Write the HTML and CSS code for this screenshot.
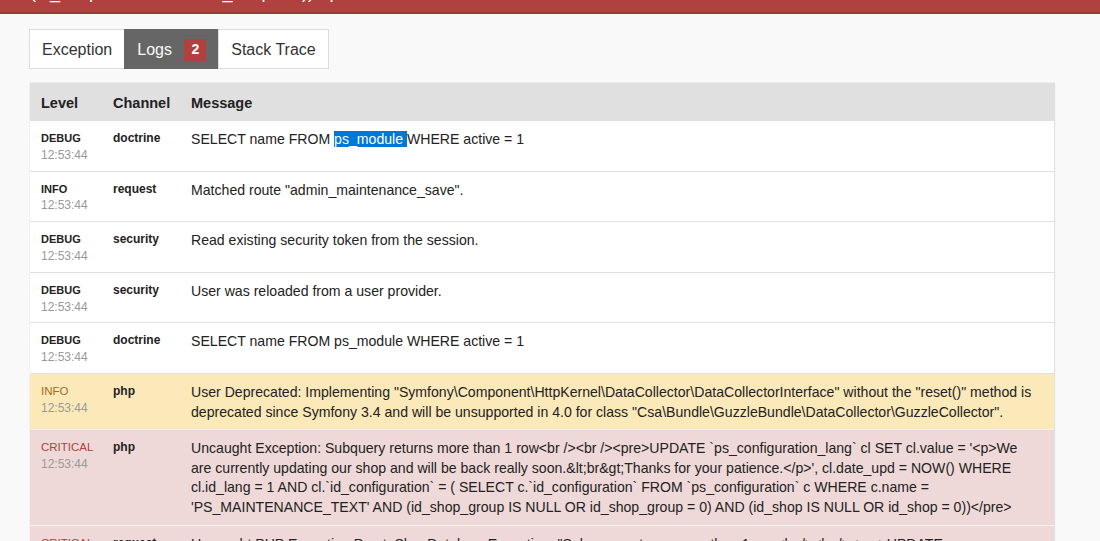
FILE: index.html
```html
<!DOCTYPE html>
<html lang="en">
<head>
<meta charset="utf-8">
<title>Subquery returns more than 1 row - Logs</title>
<link rel="stylesheet" href="styles.css">
</head>
<body>
<header class="summary">
  <div class="container">
    <h2 class="exception-message">Subquery returns more than 1 row&lt;br /&gt;&lt;br /&gt;&lt;pre&gt;UPDATE `ps_configuration_lang` cl SET cl.value = '&lt;p&gt;We are currently updating our shop and will be back really soon.&amp;lt;br&amp;gt;Thanks for your patience.&lt;/p&gt;', cl.date_upd = NOW() WHERE cl.id_lang = 1 AND cl.`id_configuration` = ( SELECT c.`id_configuration` FROM `ps_configuration` c WHERE c.name = 'PS_MAINTENANCE_TEXT' AND (id_shop_group IS NULL OR id_shop_group = 0) AND<br>(id_shop IS NULL OR id_shop = 0))&lt;/pre&gt;</h2>
  </div>
</header>

<div class="container">
  <ul class="tabs">
    <li class="tab">Exception</li>
    <li class="tab active">Logs <span class="badge">2</span></li>
    <li class="tab">Stack Trace</li>
  </ul>

  <table class="logs">
    <thead>
      <tr>
        <th class="col-level">Level</th>
        <th class="col-channel">Channel</th>
        <th>Message</th>
      </tr>
    </thead>
    <tbody>
      <tr>
        <td class="level"><span class="lvl">DEBUG</span><span class="time">12:53:44</span></td>
        <td class="channel">doctrine</td>
        <td class="msg">SELECT name FROM <span class="sel">ps_module </span>WHERE active = 1</td>
      </tr>
      <tr>
        <td class="level"><span class="lvl">INFO</span><span class="time">12:53:44</span></td>
        <td class="channel">request</td>
        <td class="msg">Matched route "admin_maintenance_save".</td>
      </tr>
      <tr>
        <td class="level"><span class="lvl">DEBUG</span><span class="time">12:53:44</span></td>
        <td class="channel">security</td>
        <td class="msg">Read existing security token from the session.</td>
      </tr>
      <tr>
        <td class="level"><span class="lvl">DEBUG</span><span class="time">12:53:44</span></td>
        <td class="channel">security</td>
        <td class="msg">User was reloaded from a user provider.</td>
      </tr>
      <tr>
        <td class="level"><span class="lvl">DEBUG</span><span class="time">12:53:44</span></td>
        <td class="channel">doctrine</td>
        <td class="msg">SELECT name FROM ps_module WHERE active = 1</td>
      </tr>
      <tr class="warning">
        <td class="level"><span class="lvl">INFO</span><span class="time">12:53:44</span></td>
        <td class="channel">php</td>
        <td class="msg">User Deprecated: Implementing "Symfony\Component\HttpKernel\DataCollector\DataCollectorInterface" without the "reset()" method is deprecated since Symfony 3.4 and will be unsupported in 4.0 for class "Csa\Bundle\GuzzleBundle\DataCollector\GuzzleCollector".</td>
      </tr>
      <tr class="error">
        <td class="level"><span class="lvl">CRITICAL</span><span class="time">12:53:44</span></td>
        <td class="channel">php</td>
        <td class="msg">Uncaught Exception: Subquery returns more than 1 row&lt;br /&gt;&lt;br /&gt;&lt;pre&gt;UPDATE `ps_configuration_lang` cl SET cl.value = '&lt;p&gt;We are currently updating our shop and will be back really soon.&amp;lt;br&amp;gt;Thanks for your patience.&lt;/p&gt;', cl.date_upd = NOW() WHERE cl.id_lang = 1 AND cl.`id_configuration` = ( SELECT c.`id_configuration` FROM `ps_configuration` c WHERE c.name = 'PS_MAINTENANCE_TEXT' AND (id_shop_group IS NULL OR id_shop_group = 0) AND (id_shop IS NULL OR id_shop = 0))&lt;/pre&gt;</td>
      </tr>
      <tr class="error">
        <td class="level"><span class="lvl">CRITICAL</span><span class="time">12:53:44</span></td>
        <td class="channel">request</td>
        <td class="msg">Uncaught PHP Exception PrestaShopDatabaseException: "Subquery returns more than 1 row&lt;br /&gt;&lt;br /&gt;&lt;pre&gt;UPDATE `ps_configuration_lang` cl SET cl.value = '&lt;p&gt;We are currently updating our shop and will be back really soon.&amp;lt;br&amp;gt;Thanks for your patience.&lt;/p&gt;', cl.date_upd = NOW() WHERE cl.id_lang = 1 AND cl.`id_configuration` = ( SELECT c.`id_configuration` FROM `ps_configuration` c WHERE c.name = 'PS_MAINTENANCE_TEXT' AND (id_shop_group IS NULL OR id_shop_group = 0) AND (id_shop IS NULL OR id_shop = 0))&lt;/pre&gt;" at classes/db/Db.php line 685</td>
      </tr>
    </tbody>
  </table>
</div>
</body>
</html>
```

FILE: styles.css
```css
html, body {
  margin: 0;
  padding: 0;
}

body {
  background: #f9f9f9;
  color: #222;
  font-family: "Liberation Sans", Arial, Helvetica, sans-serif;
  font-size: 14px;
  line-height: 1.4;
}

.container {
  width: 1024px;
  margin-left: 30px;
}

/* red exception summary bar (scrolled, only its bottom is visible) */
.summary {
  background: #b0413e;
  border-bottom: 2px solid rgba(0, 0, 0, 0.1);
  height: 12px;
  overflow: hidden;
  display: flex;
  flex-direction: column;
  justify-content: flex-end;
}

.exception-message {
  color: #fff;
  font-size: 18px;
  font-weight: 400;
  line-height: 25.2px;
  margin: 0 0 7px 0;
}

/* tabs */
.tabs {
  list-style: none;
  margin: 15px 0 14px 0;
  padding: 0;
  display: flex;
}

.tab {
  background: #fff;
  border: 1px solid #ddd;
  color: #333;
  font-size: 16px;
  line-height: 22.4px;
  height: 22.4px;
  margin-left: -1px;
  padding: 9px 12px 7px 12px;
}

.tab.active {
  background: #666;
  border-color: #666;
  color: #fafafa;
}

.badge {
  display: inline-block;
  background: #b0413e;
  color: #fff;
  font-size: 14px;
  font-weight: bold;
  line-height: 19.6px;
  margin-left: 8px;
  padding: 1px 7px;
  text-align: center;
  vertical-align: top;
  margin-top: 0;
}

/* logs table */
.logs {
  background: #fff;
  border-collapse: collapse;
  table-layout: fixed;
  width: 100%;
  box-shadow: 0 0 1px rgba(128, 128, 128, 0.35), 1px 0 1px rgba(128, 128, 128, 0.15);
}

.logs th,
.logs td {
  border-top: 1px solid #e0e0e0;
  border-bottom: 1px solid #e0e0e0;
  border-left: 0;
  border-right: 0;
  padding: 9px 10px 7px 11px;
  text-align: left;
  vertical-align: top;
}

.logs th {
  background: #e0e0e0;
  font-size: 14.5px;
  font-weight: bold;
  line-height: 19.6px;
  padding-top: 10px;
  padding-bottom: 6px;
}

.col-level {
  width: 51px;
}

.col-channel {
  width: 57px;
}

.level,
.channel {
  font-size: 12px;
  line-height: 16.8px;
  white-space: nowrap;
}

.lvl {
  display: block;
  font-size: 11px;
  font-weight: bold;
  height: 16.8px;
}

.time {
  display: block;
  color: #999;
  height: 16.8px;
}

.channel {
  font-weight: bold;
}

.logs td.msg {
  font-size: 14.1px;
  line-height: 19.6px;
  padding-right: 16px;
}

.sel {
  background: #0078d7;
  color: #fff;
}

.warning td {
  background: #fbe9ba;
  border-bottom-color: #f4f1ee;
}

.warning .lvl {
  color: #a46a1f;
  font-weight: normal;
  font-size: 11.5px;
}

.error td {
  background: #efd9d8;
  border-bottom-color: #f7f1f1;
}

.error .lvl {
  color: #b0413e;
  font-weight: normal;
  font-size: 11.5px;
}
```
